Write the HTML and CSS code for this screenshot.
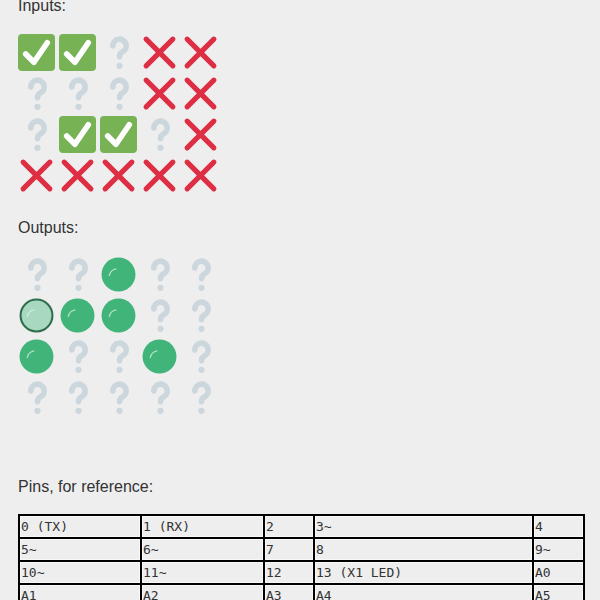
FILE: index.html
```html
<!DOCTYPE html>
<html lang="en">
<head>
  <meta charset="UTF-8" />
  <title>Pin States</title>
  <link rel="stylesheet" href="styles.css">
</head>
<body>
  <svg class="defs" width="0" height="0">
    <symbol id="yes" viewBox="0 0 36 36">
      <rect width="36" height="36" rx="4" fill="#77B255"/>
      <polyline points="7.5,19.5 15.5,27.5 28.5,8.5" fill="none" stroke="#fff" stroke-width="5.5" stroke-linecap="round" stroke-linejoin="round"/>
    </symbol>
    <symbol id="no" viewBox="0 0 36 36">
      <path d="M5 5L31 31M31 5L5 31" stroke="#DD2E44" stroke-width="5" stroke-linecap="round"/>
    </symbol>
    <symbol id="unk" viewBox="0 0 36 36">
      <path d="M12.5 11.5a6.5 6.5 0 1 1 9.5 5.8q-3 1.6-3 4.7" fill="none" stroke="#CCD6DD" stroke-width="5.5" stroke-linecap="round"/>
      <circle cx="19" cy="31" r="3" fill="#CCD6DD"/>
    </symbol>
    <symbol id="on" viewBox="0 0 36 36">
      <circle cx="18" cy="18" r="16.5" fill="#41B47A"/>
      <path d="M9 19A8.5 8.5 0 0 1 15.5 12.5" fill="none" stroke="#fff" stroke-opacity=".6" stroke-width="1.2" stroke-linecap="round"/>
    </symbol>
    <symbol id="half" viewBox="0 0 36 36">
      <circle cx="18" cy="18" r="15.5" fill="#A8D8BF" stroke="#2E6E4E" stroke-width="2"/>
      <path d="M9 19A8.5 8.5 0 0 1 15.5 12.5" fill="none" stroke="#fff" stroke-opacity=".5" stroke-width="1.2" stroke-linecap="round"/>
    </symbol>
  </svg>

  <div class="page">
    <p class="label label-inputs">Inputs:</p>
    <div class="grid" id="inputs"></div>

    <p class="label label-outputs">Outputs:</p>
    <div class="grid" id="outputs"></div>

    <p class="label label-pins">Pins, for reference:</p>
    <table class="pins">
      <colgroup>
        <col class="c1"><col class="c2"><col class="c3"><col class="c4"><col class="c5">
      </colgroup>
      <tr><td>0 (TX)</td><td>1 (RX)</td><td>2</td><td>3~</td><td>4</td></tr>
      <tr><td>5~</td><td>6~</td><td>7</td><td>8</td><td>9~</td></tr>
      <tr><td>10~</td><td>11~</td><td>12</td><td>13 (X1 LED)</td><td>A0</td></tr>
      <tr><td>A1</td><td>A2</td><td>A3</td><td>A4</td><td>A5</td></tr>
    </table>
  </div>

  <script>
    const inputs = [
      "yes yes unk no no",
      "unk unk unk no no",
      "unk yes yes unk no",
      "no no no no no"
    ];
    const outputs = [
      "unk unk on unk unk",
      "half on on unk unk",
      "on unk unk on unk",
      "unk unk unk unk unk"
    ];
    function fill(id, rows) {
      const el = document.getElementById(id);
      rows.forEach(row => {
        row.split(" ").forEach(kind => {
          el.insertAdjacentHTML("beforeend",
            '<span class="cell"><svg class="icon"><use href="#' + kind + '"/></svg></span>');
        });
      });
    }
    fill("inputs", inputs);
    fill("outputs", outputs);
  </script>
</body>
</html>
```

FILE: styles.css
```css
body { background: #eeeeee; margin: 0; font-family: "Liberation Sans", Arial, sans-serif; font-size: 16px; color: #333333; }
.defs { position: absolute; }
.page { padding: 0 16px 0 18px; }
.label { margin: 0; line-height: 18px; }
.label-inputs { margin-top: -3px; }
.label-outputs { margin-top: 21px; }
.label-pins { margin-top: 58px; }
.grid { display: grid; grid-template-columns: repeat(5, 41px); grid-auto-rows: 41px; }
#inputs { margin-top: 19px; }
#outputs { margin-top: 19px; }
.cell { display: block; }
.icon { display: block; width: 37px; height: 37px; }
.pins { margin-top: 18px; width: 565px; table-layout: fixed; border-collapse: collapse; font-family: "DejaVu Sans Mono", monospace; font-size: 13px; color: #333333; }
.pins td { border: 2px solid #000000; padding: 2px 1px; line-height: 17px; box-shadow: inset 0 0 0 1px #f8f8f8; white-space: nowrap; }
.c1 { width: 122px; }
.c2 { width: 123px; }
.c3 { width: 50px; }
.c4 { width: 219px; }
.c5 { width: 51px; }
```
